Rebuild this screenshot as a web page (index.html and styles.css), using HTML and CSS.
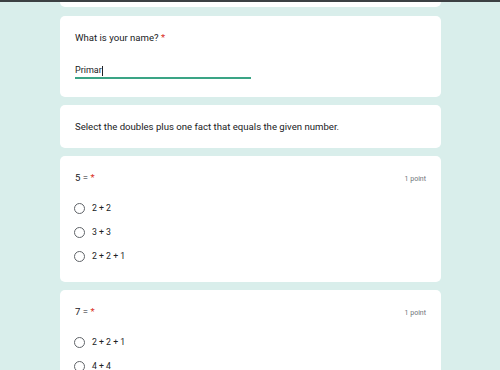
FILE: index.html
```html
<!DOCTYPE html>
<html>
<head>
<meta charset="utf-8">
<link rel="stylesheet" href="styles.css">
</head>
<body>
<div class="topbar"></div>
<div class="form">
  <div class="card card-top"></div>
  <div class="card">
    <div class="title">What is your name? <span class="req">*</span></div>
    <div class="input"><span class="typed">Primar</span><span class="caret"></span></div>
  </div>
  <div class="card">
    <div class="title">Select the doubles plus one fact that equals the given number.</div>
  </div>
  <div class="card">
    <div class="qhead"><div class="title">5 = <span class="req">*</span></div><div class="points">1 point</div></div>
    <div class="options">
      <div class="opt"><span class="radio"></span><span>2 + 2</span></div>
      <div class="opt"><span class="radio"></span><span>3 + 3</span></div>
      <div class="opt"><span class="radio"></span><span>2 + 2 + 1</span></div>
    </div>
  </div>
  <div class="card">
    <div class="qhead"><div class="title">7 = <span class="req">*</span></div><div class="points">1 point</div></div>
    <div class="options">
      <div class="opt"><span class="radio"></span><span>2 + 2 + 1</span></div>
      <div class="opt"><span class="radio"></span><span>4 + 4</span></div>
      <div class="opt"><span class="radio"></span><span>3 + 3 + 1</span></div>
    </div>
  </div>
</div>
</body>
</html>
```

FILE: styles.css
```css
html, body {
  margin: 0;
  padding: 0;
  height: 100%;
  overflow: hidden;
}
body {
  background: #d9eeeb;
  font-family: Roboto, "Liberation Sans", sans-serif;
  color: #202124;
}
.topbar {
  height: 2px;
  background: #3c4043;
}
.form {
  width: 381px;
  margin-left: 60px;
  display: flex;
  flex-direction: column;
  gap: 8px;
}
.card {
  background: #fff;
  border-radius: 5px;
  padding: 15px 15px 14px 15px;
  box-sizing: border-box;
}
.card-top {
  height: 5px;
  padding: 0;
  border-radius: 0 0 5px 5px;
  margin-bottom: 1px;
}
.title {
  font-size: 9.6px;
  line-height: 14px;
  height: 14px;
}
.req {
  color: #d93025;
}
.input {
  margin-top: 19px;
  width: 176px;
  height: 13px;
  font-size: 9px;
  line-height: 13px;
  border-bottom: 2px solid #3aa485;
  display: flex;
  align-items: center;
  margin-bottom: 4px;
}
.caret {
  display: inline-block;
  width: 1px;
  height: 10px;
  background: #202124;
}
.qhead {
  display: flex;
  justify-content: space-between;
  align-items: center;
}
.points {
  font-size: 7px;
  color: #70757a;
  margin-top: 1px;
}
.options {
  margin-top: 11px;
  display: flex;
  flex-direction: column;
}
.opt {
  height: 24px;
  display: flex;
  align-items: center;
  gap: 7px;
  font-size: 8.7px;
}
.radio {
  width: 9px;
  height: 9px;
  border: 1.3px solid #5f6368;
  border-radius: 50%;
  margin-left: -1px;
}
```
